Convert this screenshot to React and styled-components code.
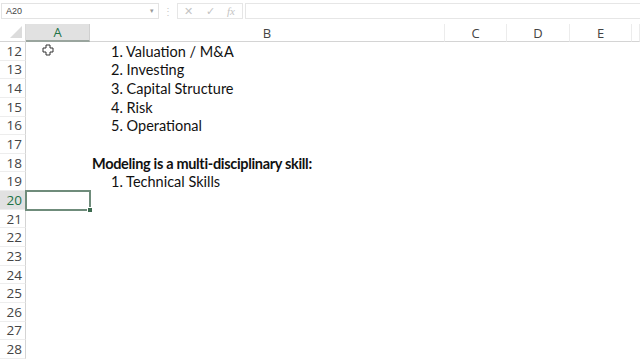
import React from 'react';
import styled, { createGlobalStyle } from 'styled-components';

const GlobalStyle = createGlobalStyle`
  html, body {
    margin: 0;
    padding: 0;
    background: #ffffff;
    overflow: hidden;
  }
`;

const Sheet = styled.div`
  width: 640px;
  height: 360px;
  overflow: hidden;
  background: #ffffff;
  font-family: "Open Sans", "Noto Sans", sans-serif;
`;

const FormulaBar = styled.div`
  height: 24px;
  display: flex;
  align-items: flex-start;
  padding-top: 3px;
  box-sizing: border-box;
  background: #ffffff;
`;

const NameBox = styled.div`
  width: 158px;
  height: 16px;
  margin-left: 1px;
  border: 1px solid #e3e3e3;
  box-sizing: border-box;
  display: flex;
  align-items: center;
  justify-content: space-between;
  padding: 0 4px;
  font-family: "Liberation Sans", sans-serif;
  font-size: 9px;
  color: #444;
`;

const Caret = styled.span`
  font-size: 7px;
  color: #999;
`;

const Dots = styled.span`
  width: 18px;
  text-align: center;
  font-size: 10px;
  line-height: 16px;
  color: #c8c8c8;
`;

const ButtonGroup = styled.div`
  width: 66px;
  height: 16px;
  border: 1px solid #e6e6e6;
  box-sizing: border-box;
  display: flex;
  align-items: center;
  justify-content: space-between;
  padding: 0 7px 0 6px;
`;

const BarIcon = styled.span`
  font-family: "Liberation Serif", serif;
  font-style: ${(p) => (p.italic ? 'italic' : 'normal')};
  font-size: 11px;
  color: #c4c4c4;
`;

const FormulaInput = styled.div`
  flex: 1;
  height: 16px;
  margin-left: 2px;
  border: 1px solid #e6e6e6;
  border-right: none;
  box-sizing: border-box;
`;

const Grid = styled.div`
  display: grid;
  grid-template-columns: 26px 64px 355px 62px 63px 62px 1fr;
  grid-auto-rows: 18.65px;
  grid-template-rows: 18px;
`;

const Corner = styled.div`
  background: #ffffff;
  border-right: 1px solid #dadada;
  border-bottom: 1px solid #d4d4d4;
  position: relative;
  overflow: hidden;
  &::after {
    content: '';
    position: absolute;
    right: 3px;
    bottom: 3px;
    border-style: solid;
    border-width: 0 0 12px 12px;
    border-color: transparent transparent #dcdcdc transparent;
  }
`;

const ColHead = styled.div`
  display: flex;
  align-items: center;
  justify-content: center;
  font-size: 13px;
  color: ${(p) => (p.active ? '#217346' : '#444')};
  background: ${(p) => (p.active ? '#e1e1e1' : '#ffffff')};
  border-right: 1px solid ${(p) => (p.active ? '#d0d0d0' : '#ececec')};
  border-bottom: ${(p) => (p.active ? '2px solid #9aa59e' : '1px solid #d4d4d4')};
  box-sizing: border-box;
`;

const RowHead = styled.div`
  display: flex;
  align-items: center;
  justify-content: flex-end;
  padding-right: 3px;
  font-size: 13.5px;
  color: ${(p) => (p.active ? '#217346' : '#444')};
  background: ${(p) => (p.active ? '#e1e1e1' : '#ffffff')};
  border-right: 1px solid #d4d4d4;
  border-bottom: 1px solid #ededed;
  box-sizing: border-box;
`;

const Cell = styled.div`
  position: relative;
  display: flex;
  align-items: center;
  white-space: nowrap;
  overflow: visible;
  font-family: "Lato", "Open Sans", sans-serif;
  font-size: 14.5px;
  font-weight: ${(p) => (p.bold ? 700 : 400)};
  letter-spacing: ${(p) => (p.bold ? '-0.32px' : '0')};
  color: #111;
  padding-left: ${(p) => (p.indent ? '21px' : '2px')};
  grid-column: ${(p) => (p.span ? 'span ' + p.span : 'auto')};
`;

const Selection = styled.div`
  position: absolute;
  left: -1px;
  top: -1px;
  right: -1px;
  bottom: -1px;
  border: 2px solid #6f8c7b;
  &::after {
    content: '';
    position: absolute;
    right: -4px;
    bottom: -4px;
    width: 4px;
    height: 4px;
    background: #3d6b50;
    border: 1px solid #fff;
  }
`;

const Cursor = styled.svg`
  position: absolute;
  left: 16px;
  top: 2px;
`;

const rows = [
  { n: 12, text: '1. Valuation / M&A', indent: true },
  { n: 13, text: '2. Investing', indent: true },
  { n: 14, text: '3. Capital Structure', indent: true },
  { n: 15, text: '4. Risk', indent: true },
  { n: 16, text: '5. Operational', indent: true },
  { n: 17 },
  { n: 18, text: 'Modeling is a multi-disciplinary skill:', bold: true },
  { n: 19, text: '1. Technical Skills', indent: true },
  { n: 20, active: true },
  { n: 21 }, { n: 22 }, { n: 23 }, { n: 24 }, { n: 25 }, { n: 26 }, { n: 27 }, { n: 28 },
];

function App() {
  return (
    <Sheet>
      <GlobalStyle />
      <FormulaBar>
        <NameBox>
          A20
          <Caret>▾</Caret>
        </NameBox>
        <Dots>⋮</Dots>
        <ButtonGroup>
          <BarIcon>✕</BarIcon>
          <BarIcon>✓</BarIcon>
          <BarIcon italic>fx</BarIcon>
        </ButtonGroup>
        <FormulaInput />
      </FormulaBar>
      <Grid>
        <Corner />
        <ColHead active>A</ColHead>
        <ColHead>B</ColHead>
        <ColHead>C</ColHead>
        <ColHead>D</ColHead>
        <ColHead>E</ColHead>
        <ColHead />
        {rows.map((r) => (
          <React.Fragment key={r.n}>
            <RowHead active={r.active}>{r.n}</RowHead>
            <Cell>
              {r.active && <Selection />}
              {r.n === 12 && (
                <Cursor width="12" height="12" viewBox="0 0 12 12">
                  <path
                    d="M4 1h4v3h3v4H8v3H4V8H1V4h3z"
                    fill="#fff"
                    stroke="#333"
                    strokeWidth="1"
                  />
                </Cursor>
              )}
            </Cell>
            <Cell span={5} bold={r.bold} indent={r.indent}>
              {r.text}
            </Cell>
          </React.Fragment>
        ))}
      </Grid>
    </Sheet>
  );
}

export default App;
